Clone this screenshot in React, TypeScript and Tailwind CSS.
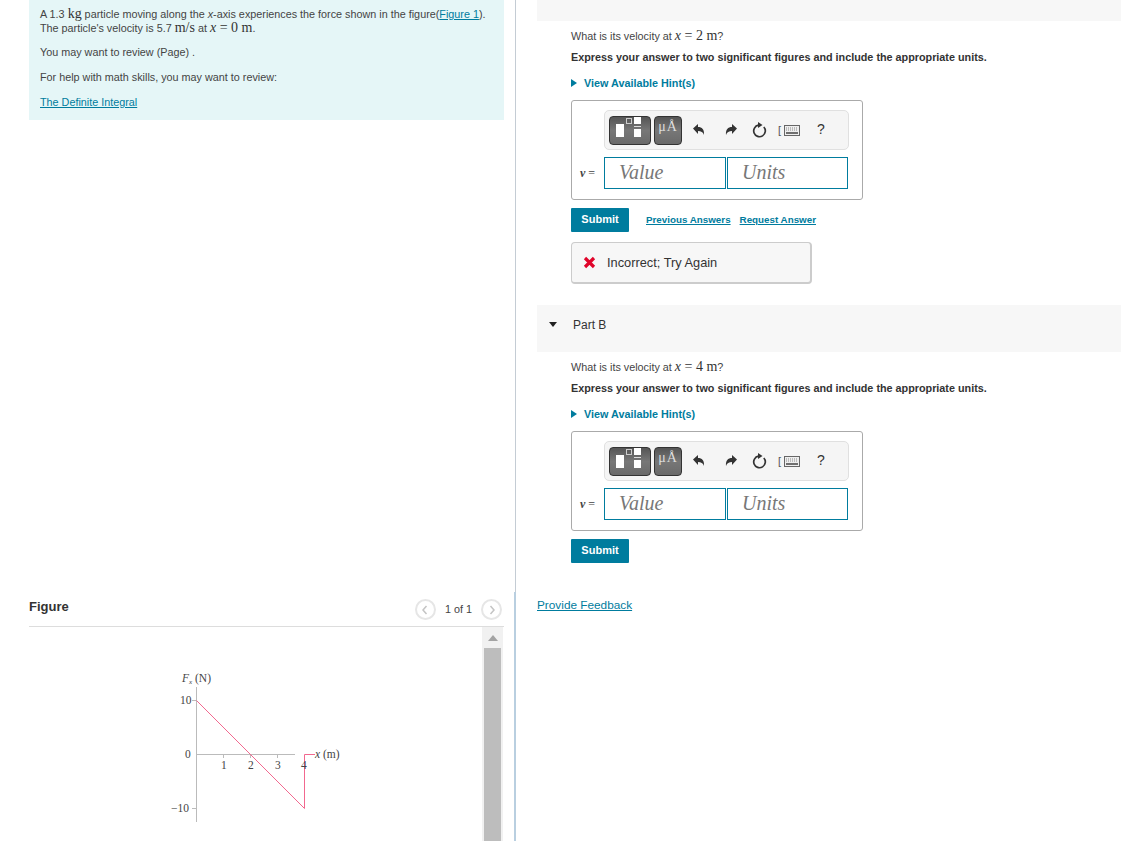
import React from "react";

const sans = "font-['Liberation_Sans',Arial,sans-serif]";
const serif = "font-['Liberation_Serif','Times_New_Roman',serif]";

function M({ children }: { children: React.ReactNode }) {
  return <span className={`${serif} text-[14px] leading-none text-[#333]`}>{children}</span>;
}

function A({ children, className = "" }: { children: React.ReactNode; className?: string }) {
  return <a className={`text-[#007c9e] underline ${className}`}>{children}</a>;
}

function Toolbar() {
  return (
    <div className="ml-[32px] w-[245px] h-[40px] bg-[#f5f5f5] border border-[#e0e0e0] rounded-[5px] flex items-center pl-[4px]">
      <div className="w-[42px] h-[29px] rounded-[4px] border border-[#333] bg-gradient-to-b from-[#555] via-[#777] to-[#6a6a6a] relative shrink-0">
        <div className="absolute left-[6px] top-[7px] w-[8px] h-[13px] bg-white" />
        <div className="absolute left-[16px] top-[1px] w-[6px] h-[6px] border border-[#ccc]" />
        <div className="absolute left-[24px] top-0 w-[7px] h-[7px] bg-white" />
        <div className="absolute left-[24px] top-[9px] w-[7px] h-[1px] bg-[#ddd]" />
        <div className="absolute left-[24px] top-[12px] w-[7px] h-[8px] bg-white" />
      </div>
      <div className={`ml-[3px] w-[28px] h-[29px] rounded-[4px] border border-[#333] bg-gradient-to-b from-[#555] via-[#777] to-[#6a6a6a] text-[#ddd] text-[14px] tracking-[1px] leading-[20px] text-center shrink-0 ${serif}`}>
        μÅ
      </div>
      <svg className="ml-[10px] shrink-0" width="14" height="14" viewBox="0 0 14 14">
        <path d="M1 5.5 6 1v3c4 0 6.5 2.500 6 8-1-3-3-4-6-4v3z" fill="#333" />
      </svg>
      <svg className="ml-[18px] shrink-0" width="14" height="14" viewBox="0 0 14 14">
        <path d="M13 5.500 8 1v3C4 4 1.500 6.500 2 12c1-3 3-4 6-4v3z" fill="#333" />
      </svg>
      <svg className="ml-[13px] shrink-0" width="16" height="16" viewBox="0 0 16 16">
        <path d="M7.500 3.200A5.800 5.800 0 1 0 12.800 5" fill="none" stroke="#333" strokeWidth="1.700" />
        <path d="M7 0 7 6 11.500 3z" fill="#333" />
      </svg>
      <span className="ml-[11px] text-[11px] text-[#555] leading-none">[</span>
      <svg className="ml-[3px] shrink-0" width="16" height="11" viewBox="0 0 16 11">
        <rect x="0.500" y="0.500" width="15" height="10" fill="#eee" stroke="#666" />
        <path d="M2 3h12M2 5h12" stroke="#888" strokeDasharray="1 1" />
        <path d="M2 8h12" stroke="#444" strokeWidth="1.500" />
      </svg>
      <span className={`ml-[17px] mt-[-2px] text-[14px] text-[#333] ${sans}`}>?</span>
    </div>
  );
}

function Answer() {
  return (
    <div className="w-[292px] h-[100px] border border-[#aaa] rounded-[3px] pt-[9px]">
      <Toolbar />
      <div className="flex items-center mt-[7px] h-[32px]">
        <span className={`w-[32px] pl-[8px] text-[12px] text-[#444] ${serif}`}>
          <i className="font-bold">v</i> =
        </span>
        <div className={`w-[122px] h-[32px] border border-[#007c9e] italic text-[20px] leading-[28px] text-[#777] pl-[14px] ${serif}`}>Value</div>
        <div className={`ml-[1px] w-[121px] h-[32px] border border-[#007c9e] italic text-[20px] leading-[28px] text-[#777] pl-[14px] ${serif}`}>Units</div>
      </div>
    </div>
  );
}

function Submit() {
  return (
    <div className="w-[58px] h-[24px] bg-[#007c9e] rounded-[1px] text-white text-[11px] font-bold leading-[22px] text-center">Submit</div>
  );
}

function Question({ val }: { val: string }) {
  return (
    <>
      <div className="text-[10.8px] leading-[14px] text-[#444]">
        What is its velocity at <M><i>x</i> = {val} m</M>?
      </div>
      <div className="mt-[7px] text-[10.8px] leading-[14px] font-bold text-[#333]">
        Express your answer to two significant figures and include the appropriate units.
      </div>
      <div className="mt-[12px] flex items-center text-[10.8px] leading-[14px] font-bold text-[#007c9e]">
        <svg width="6" height="8" viewBox="0 0 6 8" className="mr-[7px]">
          <path d="M0 0l6 4-6 4z" fill="#007c9e" />
        </svg>
        View Available Hint(s)
      </div>
    </>
  );
}

function Chart() {
  const text = { fontFamily: "'Liberation Serif', serif", fontSize: 11.5, fill: "#444" };
  return (
    <svg width="200" height="180" viewBox="0 0 200 180" className="ml-[131px] mt-[33px] shrink-0">
      <path d="M36.500 27V162M36 94.500H135M36 40.500h-4M36 148.500h-4M63.500 94v4M90.500 94v4M117.500 94v4" stroke="#bbb" fill="none" />
      <path d="M36.500 40.500 144.500 148.500V94.500H155" stroke="#f2688f" fill="none" strokeWidth="1" />
      <text x="22" y="22" style={text}><tspan fontStyle="italic">F</tspan><tspan fontSize="7" fontStyle="italic" dy="2">x</tspan><tspan dy="-2"> (N)</tspan></text>
      <text x="20" y="44" style={text}>10</text>
      <text x="25" y="98" style={text}>0</text>
      <text x="11" y="152" style={text}>−10</text>
      <text x="61" y="109" style={text}>1</text>
      <text x="88" y="109" style={text}>2</text>
      <text x="115" y="109" style={text}>3</text>
      <text x="141" y="109" style={text}>4</text>
      <text x="155" y="98" style={text}><tspan fontStyle="italic">x</tspan> (m)</text>
    </svg>
  );
}

function Nav({ d }: { d: string }) {
  return (
    <div className="w-[21px] h-[21px] rounded-full border-2 border-[#e6e6e6] flex items-center justify-center">
      <svg width="10" height="12" viewBox="0 0 10 12">
        <path d={d} fill="none" stroke="#c4c4c4" strokeWidth="1.500" />
      </svg>
    </div>
  );
}

export default function App() {
  return (
    <div className={`w-[1121px] h-[841px] overflow-hidden bg-white flex text-[#333] ${sans}`}>
      <div className="w-[514px] shrink-0 pl-[29px] pr-[10px] flex flex-col">
        <div className="h-[120px] bg-[#e5f6f7] pl-[11px] pt-[7px] text-[10.8px] leading-[14px] text-[#444]">
          <p>
            A 1.3 <M>kg</M> particle moving along the <i>x</i>-axis experiences the force shown in the figure(<A>Figure 1</A>).
            <br />
            The particle's velocity is 5.7 <M>m/s</M> at <M><i>x</i> = 0 m</M>.
          </p>
          <p className="mt-[10px]">You may want to review (Page) .</p>
          <p className="mt-[11px]">For help with math skills, you may want to review:</p>
          <p className="mt-[11px]"><A>The Definite Integral</A></p>
        </div>
        <div className="mt-[475px] h-[32px] border-b border-[#ddd] flex items-start">
          <span className="text-[13px] font-bold leading-[24px] text-[#333]">Figure</span>
          <div className="ml-auto flex items-center mt-[4px] mr-[2px]">
            <Nav d="M6.500 2 3 6l3.500 4" />
            <span className="mx-[9px] text-[10.8px] text-[#444]">1 of 1</span>
            <Nav d="M3.500 2 7 6l-3.500 4" />
          </div>
        </div>
        <div className="flex-1 flex justify-between min-h-0">
          <Chart />
          <div className="w-[21px] mr-[1px] bg-[#f1f1f1] flex flex-col items-center">
            <div className="h-[21px] flex items-center">
              <div className="w-0 h-0 border-x-[5px] border-x-transparent border-b-[6px] border-b-[#a3a3a3]" />
            </div>
            <div className="w-[17px] flex-1 bg-[#bdbdbd]" />
          </div>
        </div>
      </div>
      <div className="w-[2px] shrink-0 flex flex-col">
        <div className="h-[592px] ml-[1px] w-px bg-[#c4ccd4]" />
        <div className="flex-1 w-[2px] bg-[#b9cfe0]" />
      </div>
      <div className="flex-1 pl-[21px]">
        <div className="h-[21px] bg-[#f7f7f7]" />
        <div className="pl-[34px] pt-[8px]">
          <Question val="2" />
          <div className="mt-[10px]"><Answer /></div>
          <div className="mt-[8px] flex items-center">
            <Submit />
            <A className="ml-[17px] text-[9.8px] font-bold">Previous Answers</A>
            <A className="ml-[9px] text-[9.8px] font-bold">Request Answer</A>
          </div>
          <div className="mt-[10px] w-[241px] h-[42px] bg-[#f7f7f7] border border-[#ccc] border-r-2 border-b-2 rounded-[4px] flex items-center pl-[11px]">
            <svg width="13" height="13" viewBox="0 0 13 13">
              <path d="M2 2l9 9M11 2l-9 9" stroke="#e0052b" strokeWidth="3.200" />
            </svg>
            <span className="ml-[11px] text-[12.8px] text-[#333]">Incorrect; Try Again</span>
          </div>
        </div>
        <div className="mt-[21px] h-[47px] bg-[#f7f7f7] flex items-center pl-[12px] pb-[8px]">
          <div className="w-0 h-0 border-x-[4px] border-x-transparent border-t-[5px] border-t-[#222]" />
          <span className="ml-[16px] text-[12px] text-[#333]">Part B</span>
        </div>
        <div className="pl-[34px] pt-[8px]">
          <Question val="4" />
          <div className="mt-[10px]"><Answer /></div>
          <div className="mt-[8px]"><Submit /></div>
        </div>
        <div className="mt-[29px]"><A className="text-[11.8px]">Provide Feedback</A></div>
      </div>
    </div>
  );
}
